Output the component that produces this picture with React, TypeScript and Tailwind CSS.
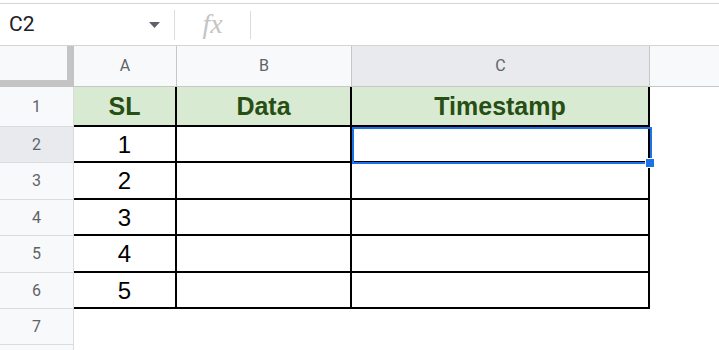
import React from "react";

const rows = [
  { n: 1, h: "h-[40px]", sl: "SL", head: true },
  { n: 2, h: "h-[36px]", sl: "1" },
  { n: 3, h: "h-[37px]", sl: "2" },
  { n: 4, h: "h-[36px]", sl: "3" },
  { n: 5, h: "h-[37px]", sl: "4" },
  { n: 6, h: "h-[36px]", sl: "5" },
  { n: 7, h: "h-[36px]", sl: "", empty: true },
  { n: 8, h: "h-[36px]", sl: "", empty: true, hideNum: true },
];

function FormulaBar() {
  return (
    <div className="pt-[3px] bg-white">
      <div className="h-[43px] border-t border-b border-[#d4d4d4] flex items-center">
        <div className="w-[174px] h-full flex items-center justify-between pl-[9px] pr-[14px]">
          <span className="text-[21px] text-[#202124] font-['Roboto',sans-serif] leading-none">C2</span>
          <svg width="11" height="6" viewBox="0 0 11 6">
            <path d="M0 0 L11 0 L5.5 6 Z" fill="#5f6368" />
          </svg>
        </div>
        <div className="w-px h-[30px] bg-[#dadce0]" />
        <div className="w-[75px] h-full flex items-center justify-center">
          <span className="text-[28px] italic text-[#c4c4c4] font-['Liberation_Serif',serif] leading-none -mt-[2px]">
            fx
          </span>
        </div>
        <div className="w-px h-[28px] bg-[#dadce0]" />
      </div>
    </div>
  );
}

function ColumnHeaders() {
  return (
    <div className="flex h-[41px] font-['Roboto',sans-serif] text-[16px] text-[#5f6368]">
      <div className="w-[74px] h-full bg-[#f8f9fa] border-r-[7px] border-b-[7px] border-[#c4c4c4]" />
      <div className="w-[103px] h-full bg-[#f8f9fa] border-r border-b border-[#c7c7c7] flex items-center justify-center">
        A
      </div>
      <div className="w-[175px] h-full bg-[#f8f9fa] border-r border-b border-[#c7c7c7] flex items-center justify-center">
        B
      </div>
      <div className="w-[298px] h-full bg-[#e8eaed] border-r border-b border-[#c7c7c7] flex items-center justify-center">
        C
      </div>
      <div className="flex-1 h-full bg-[#f8f9fa] border-b border-[#c7c7c7]" />
    </div>
  );
}

function Row({ r }: { r: (typeof rows)[number] }) {
  const cell = r.empty
    ? ""
    : r.head
      ? "bg-[#d9ead3] border-r-2 border-b-2 border-black"
      : "bg-white border-r-2 border-b-2 border-black";
  const text = r.head
    ? "text-[25px] font-bold text-[#274e13] pt-[2px]"
    : "text-[24px] text-black pt-[1px]";
  return (
    <div className={`flex ${r.h}`}>
      <div
        className={`w-[74px] h-full border-r border-b border-[#dadce0] flex items-center justify-center font-['Roboto',sans-serif] text-[16px] text-[#5f6368] ${
          r.n === 2 ? "bg-[#e8eaed]" : "bg-[#f8f9fa]"
        }`}
      >
        {r.hideNum ? "" : r.n}
      </div>
      <div className={`w-[103px] h-full flex items-center justify-center ${cell} ${text}`}>{r.sl}</div>
      <div className={`w-[175px] h-full flex items-center justify-center ${cell} ${text}`}>
        {r.head ? "Data" : ""}
      </div>
      <div className={`w-[298px] h-full flex items-center justify-center ${cell} ${text}`}>
        {r.head ? "Timestamp" : ""}
      </div>
      <div className="flex-1 h-full bg-white" />
    </div>
  );
}

export default function App() {
  return (
    <div className="relative w-[719px] h-[350px] overflow-hidden bg-white font-['Liberation_Sans',Arial,sans-serif]">
      <FormulaBar />
      <ColumnHeaders />
      {rows.map((r) => (
        <Row key={r.n} r={r} />
      ))}

      {/* selected cell C2 */}
      <div className="absolute left-[352px] top-[127px] w-[300px] h-[37px] border-[2.5px] border-[#1a73e8]" />
      <div className="absolute left-[645px] top-[158px] w-[10px] h-[10px] bg-[#1a73e8] border border-white" />
    </div>
  );
}
